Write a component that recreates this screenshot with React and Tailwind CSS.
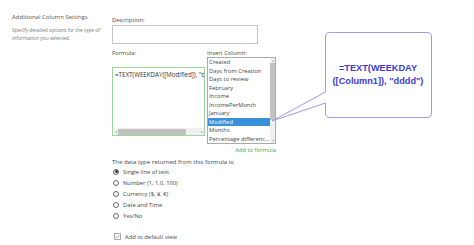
import React from 'react';

const columns = [
  'Created',
  'Days from Creation',
  'Days to review',
  'February',
  'Income',
  'IncomePerMonth',
  'January',
  'Modified',
  'Months',
  'Percentage differenc...',
];

const types = ['Single line of text', 'Number (1, 1.0, 100)', 'Currency ($, ¥, €)', 'Date and Time', 'Yes/No'];

function Radio({ checked }) {
  return (
    <span className="ml-[1px] w-[6px] h-[6px] rounded-full border border-[#666] bg-white flex items-center justify-center shrink-0">
      {checked && <span className="w-[3px] h-[3px] rounded-full bg-[#333]" />}
    </span>
  );
}

function Callout() {
  return (
    <>
      <svg className="absolute inset-0 pointer-events-none" width="474" height="245" viewBox="0 0 474 245">
        <path
          d="M329.5,32.5 H427 Q431.5,32.5 431.5,37 V113 Q431.5,117.5 427,117.5 H330 Q325.5,117.5 325.5,113 V103 L272,121 L325.5,92 V37 Q325.5,32.5 329.5,32.5 Z"
          fill="white"
          stroke="#9c9ce6"
          strokeWidth="1"
        />
      </svg>
      <div className="absolute left-[325px] top-[32px] w-[106px] h-[86px] flex items-center justify-center text-center font-['Liberation_Sans',Arial,sans-serif] font-bold text-[9.2px] leading-[13px] text-[#3c3cd2]">
        <div>
          =TEXT(WEEKDAY
          <br />
          ([Column1]), "dddd")
        </div>
      </div>
    </>
  );
}

export default function App() {
  return (
    <div className="relative w-[474px] h-[245px] bg-white overflow-hidden flex font-['Open_Sans',sans-serif] text-[#444]">
      {/* left description */}
      <div className="w-[112px] pl-[12px] pt-[13px] shrink-0">
        <div className="text-[6px] leading-[8px] text-[#555]">Additional Column Settings</div>
        <div className="mt-[5px] text-[4.9px] leading-[8px] text-[#777]">
          Specify detailed options for the type of
          <br />
          information you selected.
        </div>
      </div>

      {/* form */}
      <div className="pt-[16px] w-[180px] flex flex-col text-[5.8px] leading-[8px]">
        <div>Description:</div>
        <div className="mt-[1px] w-[146px] h-[19px] border border-[#c6c6c6]" />

        <div className="mt-[5px] flex">
          <div className="w-[95px] shrink-0">
            <div>Formula:</div>
            <div className="mt-[10px] w-[93px] h-[69px] border border-[#9dd49d] flex flex-col">
              <div className="pt-[3px] px-[2px] whitespace-nowrap overflow-hidden text-[6.2px] text-[#333]">
                =TEXT(WEEKDAY([Modified]), "d
              </div>
              <div className="flex-1" />
              <div className="h-[7px] flex items-center bg-[#f0f0f0]">
                <span className="w-[5px] text-[4px] leading-[7px] text-[#999] text-center">◂</span>
                <span className="w-[68px] h-[6px] bg-[#c2c2c2]" />
                <span className="flex-1" />
                <span className="w-[5px] text-[4px] leading-[7px] text-[#999] text-center">▸</span>
              </div>
            </div>
          </div>

          <div className="w-[69px] shrink-0">
            <div>Insert Column:</div>
            <div className="w-[69px] h-[87px] border border-[#ababab] flex overflow-hidden">
              <div className="flex-1 flex flex-col">
                {columns.map((c) => (
                  <div
                    key={c}
                    className={`h-[8.6px] leading-[8.6px] pl-[1px] whitespace-nowrap overflow-hidden ${
                      c === 'Modified' ? 'bg-[#3a8fd9] text-white' : 'text-[#444]'
                    }`}
                  >
                    {c}
                  </div>
                ))}
              </div>
              <div className="w-[7px] bg-[#f0f0f0] flex flex-col items-center">
                <span className="h-[5px] text-[3.5px] leading-[5px] text-[#aaa]">▴</span>
                <span className="w-[6px] h-[57px] bg-[#c2c2c2]" />
                <span className="flex-1" />
                <span className="h-[5px] text-[3.5px] leading-[5px] text-[#aaa]">▾</span>
              </div>
            </div>
          </div>
        </div>

        <div className="mt-[2px] w-[164px] text-right text-[#45a045]">Add to formula</div>

        <div className="mt-[4px] text-[6px]">The data type returned from this formula is:</div>
        <div className="flex flex-col">
          {types.map((t, i) => (
            <div key={t} className="h-[11px] flex items-center gap-[4px]">
              <Radio checked={i === 0} />
              <span>{t}</span>
            </div>
          ))}
        </div>

        <div className="mt-[10px] h-[11px] flex items-center gap-[4px]">
          <span className="ml-[2px] w-[7px] h-[7px] border border-[#aaa] flex items-center justify-center">
            <svg width="5" height="5" viewBox="0 0 5 5">
              <path d="M0.7,2.6 L2,3.8 L4.3,1" fill="none" stroke="#888" strokeWidth="0.7" />
            </svg>
          </span>
          <span>Add to default view</span>
        </div>
      </div>

      <Callout />
    </div>
  );
}
